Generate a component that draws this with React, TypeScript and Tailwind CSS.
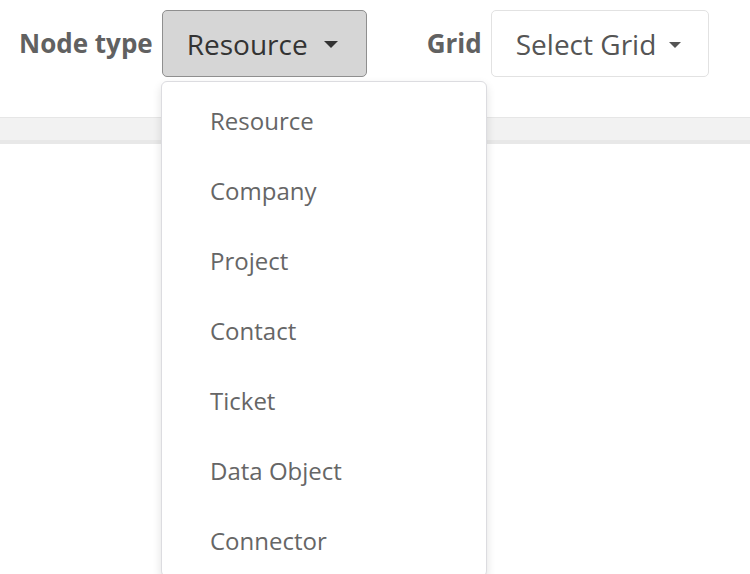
const NODE_TYPES = ["Resource", "Company", "Project", "Contact", "Ticket", "Data Object", "Connector"];

function Caret({ className }: { className?: string }) {
  return (
    <svg width="14" height="7" viewBox="0 0 14 7" className={className}>
      <path d="M0 0 L14 0 L7 7 Z" fill="currentColor" />
    </svg>
  );
}

export default function App() {
  return (
    <div
      className="relative h-[574px] w-[750px] overflow-hidden bg-white"
      style={{ fontFamily: "'Open Sans', 'Noto Sans', sans-serif" }}
    >
      <div className="flex h-[87px] items-start pt-[10px] pl-[19px]">
        <div className="flex h-[67px] items-center text-[26px] font-bold text-[#616161]">Node type</div>
        <div className="relative ml-[9px]">
          <button className="flex h-[67px] w-[205px] items-center rounded-[5px] border border-[#8f8f8f] bg-[#d6d6d6] pl-[24px] text-[28px] text-[#333]">
            <span>Resource</span>
            <Caret className="ml-[16px] mt-[2px] text-[#333]" />
          </button>
        </div>
        <div className="ml-[60px] flex h-[67px] items-center text-[26px] font-bold text-[#616161]">Grid</div>
        <button className="ml-[9px] flex h-[67px] w-[218px] items-center rounded-[5px] border border-[#e2e2e2] bg-white pl-[24px] text-[28px] text-[#555]">
          <span>Select Grid</span>
          <Caret className="ml-[13px] mt-[2px] h-[6px] w-[12px] text-[#555]" />
        </button>
      </div>

      <div className="mt-[30px] h-[27px] border-t border-[#e6e6e6] bg-[#f2f2f2] border-b-[4px] border-b-[#e8e8e8]" />

      <ul className="absolute left-[161px] top-[81px] w-[326px] rounded-[6px] border border-[#dcdce0] bg-white pt-[4px] shadow-[0_4px_10px_rgba(0,0,0,0.12)]">
        {NODE_TYPES.map((t) => (
          <li key={t} className="flex h-[70px] items-center pl-[48px] text-[24px] text-[#666]">
            {t}
          </li>
        ))}
      </ul>
    </div>
  );
}
